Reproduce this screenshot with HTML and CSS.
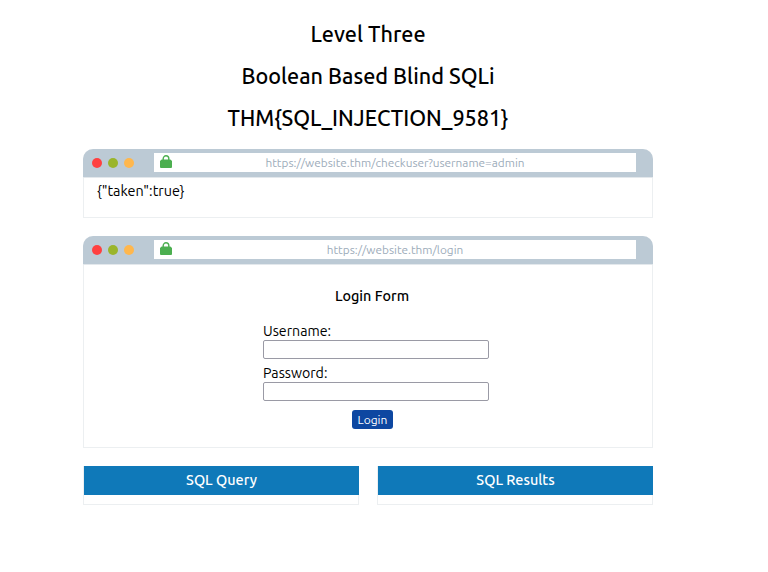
FILE: index.html
```html
<!DOCTYPE html>
<html lang="en">
<head>
    <meta charset="UTF-8">
    <meta name="viewport" content="width=device-width, initial-scale=1.0">
    <title>Level Three</title>
    <link rel="stylesheet" href="styles.css">
</head>
<body>
    <div class="container">
        <h1>Level Three</h1>
        <h1>Boolean Based Blind SQLi</h1>
        <h1 class="flag">THM{SQL_INJECTION_9581}</h1>

        <!-- Browser mock: API response -->
        <div class="browser">
            <div class="browser-bar">
                <span class="dot dot-red"></span>
                <span class="dot dot-green"></span>
                <span class="dot dot-yellow"></span>
                <div class="url-box">
                    <svg class="lock" width="12" height="13" viewBox="0 0 12 13">
                        <path d="M3.2 6V3.6a2.8 2.8 0 0 1 5.6 0V6" fill="none" stroke="#4caf50" stroke-width="1.4"/>
                        <path d="M1.6 4.6h8.8L12 6v6a1 1 0 0 1-1 1H1a1 1 0 0 1-1-1V6z" fill="#4caf50"/>
                    </svg>
                    <span class="url-text">https://website.thm/checkuser?username=admin</span>
                </div>
            </div>
            <div class="browser-body response">{"taken":true}</div>
        </div>

        <!-- Browser mock: login form -->
        <div class="browser">
            <div class="browser-bar">
                <span class="dot dot-red"></span>
                <span class="dot dot-green"></span>
                <span class="dot dot-yellow"></span>
                <div class="url-box">
                    <svg class="lock" width="12" height="13" viewBox="0 0 12 13">
                        <path d="M3.2 6V3.6a2.8 2.8 0 0 1 5.6 0V6" fill="none" stroke="#4caf50" stroke-width="1.4"/>
                        <path d="M1.6 4.6h8.8L12 6v6a1 1 0 0 1-1 1H1a1 1 0 0 1-1-1V6z" fill="#4caf50"/>
                    </svg>
                    <span class="url-text">https://website.thm/login</span>
                </div>
            </div>
            <div class="browser-body login">
                <div class="login-title">Login Form</div>
                <div class="form-group">
                    <label for="username">Username:</label>
                    <input type="text" id="username">
                </div>
                <div class="form-group">
                    <label for="password">Password:</label>
                    <input type="password" id="password">
                </div>
                <button class="login-btn">Login</button>
            </div>
        </div>

        <div class="panels">
            <div class="panel"><div class="panel-head">SQL Query</div></div>
            <div class="panel"><div class="panel-head">SQL Results</div></div>
        </div>
    </div>
</body>
</html>
```

FILE: styles.css
```css
body {
    font-family: 'Ubuntu', 'Noto Sans', 'Open Sans', sans-serif;
    margin: 0;
    padding: 0;
    background: #ffffff;
    color: #000;
}

.container {
    width: 570px;
    margin: 0 auto 0 83px;
    padding-top: 21px;
}

h1 {
    font-size: 21.6px;
    font-weight: 500;
    line-height: 26px;
    margin: 0 0 16px;
    text-align: center;
}

h1.flag {
    margin-bottom: 18px;
}

.browser {
    border: 1px solid #eceff1;
    border-top: none;
    border-radius: 10px 10px 0 0;
    margin-bottom: 18px;
}

.browser-bar {
    display: flex;
    align-items: center;
    height: 28px;
    margin: 0 -1px;
    padding-left: 9px;
    background: #bccad5;
    border-bottom: 1px solid #e3e8ec;
    border-radius: 10px 10px 0 0;
}

.dot {
    width: 10px;
    height: 10px;
    border-radius: 50%;
    margin-right: 6px;
}

.dot-red { background: #ff4040; }
.dot-green { background: #9ab52b; }
.dot-yellow { background: #ffb74d; }

.url-box {
    display: flex;
    align-items: center;
    width: 482px;
    height: 19px;
    margin: -1px 0 0 14px;
    background: #fff;
}

.lock {
    margin: -3px 0 0 6px;
}

.url-text {
    flex: 1;
    text-align: center;
    font-size: 11.8px;
    color: #9dacba;
    margin-right: 18px;
}

.response {
    font-size: 14.4px;
    height: 39px;
    padding: 5px 13px 0;
    box-sizing: border-box;
}

.login {
    height: 182px;
    padding-top: 23px;
    box-sizing: border-box;
}

.login-title {
    font-size: 14.4px;
    font-weight: 500;
    text-align: center;
    margin-left: 8px;
    margin-bottom: 19px;
}

.form-group {
    width: 226px;
    margin: 0 0 6px 179px;
    font-size: 14.2px;
}

.form-group label {
    display: block;
    line-height: 17px;
}

.form-group input {
    display: block;
    width: 100%;
    height: 19px;
    box-sizing: border-box;
    border: 1px solid #9a9aa5;
    border-radius: 2px;
    padding: 0 4px;
}

.login-btn {
    display: block;
    margin: 9px 0 0 268px;
    width: 41px;
    padding: 0;
    height: 19px;
    background: #0d47a1;
    color: #fff;
    border: none;
    border-radius: 3px;
    font-family: inherit;
    font-size: 12px;
}

.panels {
    display: flex;
    justify-content: space-between;
}

.panel {
    width: 276px;
    height: 39px;
    box-sizing: border-box;
    border: 1px solid #eceff1;
    border-top: none;
}

.panel-head {
    background: #0f79b9;
    color: #fff;
    font-size: 14.4px;
    font-weight: 500;
    text-align: center;
    line-height: 29px;
    margin-right: -1px;
}
```
